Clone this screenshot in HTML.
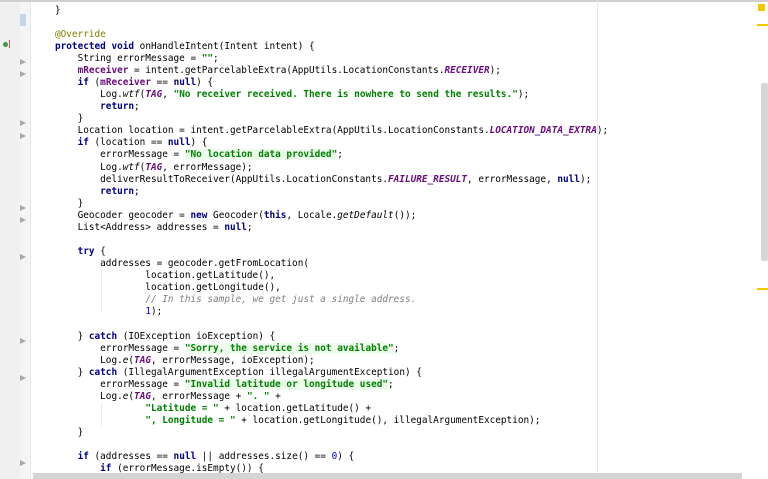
<!DOCTYPE html>
<html><head><meta charset="utf-8"><style>
html,body{margin:0;padding:0;width:768px;height:479px;overflow:hidden;background:#fff;}
#g1{position:absolute;left:0;top:0;width:20px;height:479px;background:#f0f0f0;}
#g2{position:absolute;left:20px;top:0;width:10px;height:479px;background:#f5f5f5;border-right:1px solid #e8e8e8;}
#top{position:absolute;left:0;top:0;width:768px;height:2px;background:#cfcfcf;}
#margin{position:absolute;left:597px;top:0;width:1px;height:479px;background:#e6e6e6;}
pre{position:absolute;left:55px;top:4.5px;margin:0;font-family:"DejaVu Sans Mono","Liberation Mono",monospace;font-size:9.38px;line-height:12.08px;color:#000;}
.k{color:#000080;font-weight:bold}
.s{color:#008000;font-weight:bold}
.h{background:#edfced}
.f{color:#660e7a;font-weight:bold}
.fi{color:#660e7a;font-weight:bold;font-style:italic}
.i{font-style:italic}
.a{color:#808000}
.c{color:#808080;font-style:italic}
.arr{position:absolute;left:20px;width:0;height:0;border-top:3.5px solid transparent;border-bottom:3.5px solid transparent;border-left:6px solid #a8a8a8;}
.ig{position:absolute;width:1px;background:#ececec;}
</style></head><body>
<div id="g1"></div><div id="g2"></div><div id="top"></div><div id="margin"></div>
<div style="position:absolute;left:20px;top:14px;width:6px;height:12px;background:#c5d5ea"></div>
<div style="position:absolute;left:3px;top:42px;width:5px;height:5px;border-radius:50%;background:#3f9b4a"></div>
<div style="position:absolute;left:9px;top:40px;width:1px;height:8px;background:#e05050"></div>
<div class="arr" style="top:59px"></div><div class="arr" style="top:71px"></div>
<div class="arr" style="top:120px"></div><div class="arr" style="top:133px"></div>
<div class="arr" style="top:205px"></div><div class="arr" style="top:217px"></div>
<div class="arr" style="top:254px"></div>
<div class="arr" style="top:338px"></div><div class="arr" style="top:375px"></div>
<div class="arr" style="top:460px"></div>
<div class="ig" style="left:101px;top:270px;height:42px"></div>
<div class="ig" style="left:101px;top:403px;height:24px"></div>
<div style="position:absolute;left:758px;top:4px;width:7px;height:7px;background:#f0c800"></div>
<div style="position:absolute;left:757px;top:24px;width:11px;height:1.5px;background:#f0c800"></div>
<div style="position:absolute;left:757px;top:288px;width:11px;height:1.5px;background:#f0c800"></div>
<div style="position:absolute;left:761px;top:83px;width:7px;height:178px;background:#d6d6d6;border-radius:2px"></div>
<div style="position:absolute;left:33px;top:473px;width:709px;height:6px;background:#d4d4d4"></div>
<pre>}

<span class="a">@Override</span>
<span class="k">protected void</span> onHandleIntent(Intent intent) {
    String errorMessage = <span class="s">""</span>;
    <span class="f">mReceiver</span> = intent.getParcelableExtra(AppUtils.LocationConstants.<span class="fi">RECEIVER</span>);
    <span class="k">if</span> (<span class="f">mReceiver</span> == <span class="k">null</span>) {
        Log.<span class="i">wtf</span>(<span class="fi">TAG</span>, <span class="s">"No receiver received. There is nowhere to send the results."</span>);
        <span class="k">return</span>;
    }
    Location location = intent.getParcelableExtra(AppUtils.LocationConstants.<span class="fi">LOCATION_DATA_EXTRA</span>);
    <span class="k">if</span> (location == <span class="k">null</span>) {
        errorMessage = <span class="s h">"No location data provided"</span>;
        Log.<span class="i">wtf</span>(<span class="fi">TAG</span>, errorMessage);
        deliverResultToReceiver(AppUtils.LocationConstants.<span class="fi">FAILURE_RESULT</span>, errorMessage, <span class="k">null</span>);
        <span class="k">return</span>;
    }
    Geocoder geocoder = <span class="k">new</span> Geocoder(<span class="k">this</span>, Locale.<span class="i">getDefault</span>());
    List&lt;Address&gt; addresses = <span class="k">null</span>;

    <span class="k">try</span> {
        addresses = geocoder.getFromLocation(
                location.getLatitude(),
                location.getLongitude(),
                <span class="c">// In this sample, we get just a single address.</span>
                <span style="color:#0000ff">1</span>);

    } <span class="k">catch</span> (IOException ioException) {
        errorMessage = <span class="s h">"Sorry, the service is not available"</span>;
        Log.<span class="i">e</span>(<span class="fi">TAG</span>, errorMessage, ioException);
    } <span class="k">catch</span> (IllegalArgumentException illegalArgumentException) {
        errorMessage = <span class="s h">"Invalid latitude or longitude used"</span>;
        Log.<span class="i">e</span>(<span class="fi">TAG</span>, errorMessage + <span class="s">". "</span> +
                <span class="s">"Latitude = "</span> + location.getLatitude() +
                <span class="s">", Longitude = "</span> + location.getLongitude(), illegalArgumentException);
    }

    <span class="k">if</span> (addresses == <span class="k">null</span> || addresses.size() == <span style="color:#0000ff">0</span>) {
        <span class="k">if</span> (errorMessage.isEmpty()) {
</pre>
</body></html>
